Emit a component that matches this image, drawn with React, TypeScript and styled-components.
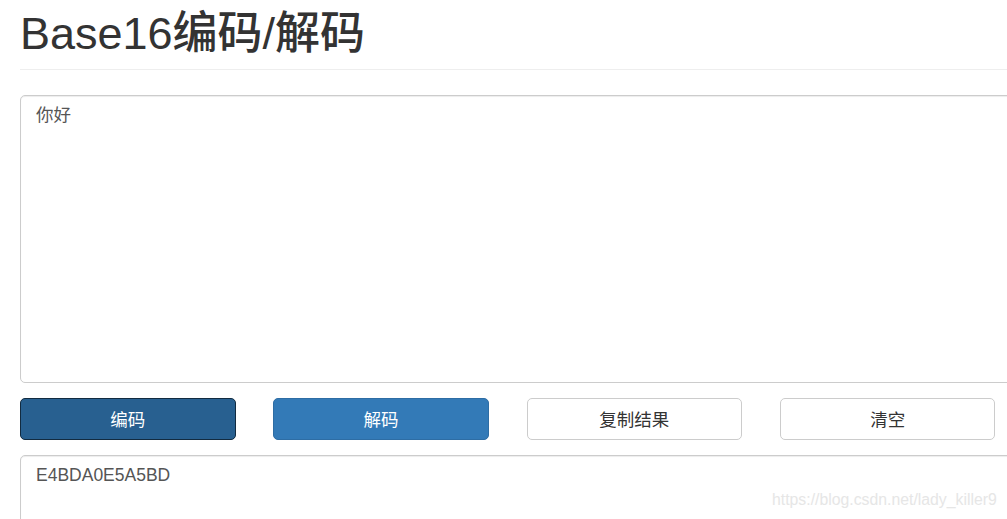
import React from "react";
import styled, { createGlobalStyle } from "styled-components";

const GlobalStyle = createGlobalStyle`
  html, body {
    margin: 0;
    padding: 0;
    background: #fff;
    overflow: hidden;
  }
  body {
    font-family: "Liberation Sans", Arial, "Noto Sans CJK SC", sans-serif;
    font-size: 17.5px;
    line-height: 1.42857;
    color: #333;
  }
  * { box-sizing: border-box; }
`;

const Page = styled.div`
  position: relative;
  width: 1007px;
  height: 519px;
  overflow: hidden;
`;

const Container = styled.div`
  width: 1100px;
  padding: 0 0 0 20px;
`;

const Header = styled.div`
  margin-top: 9px;
  padding-bottom: 10px;
  border-bottom: 1px solid #eee;
  margin-bottom: 25px;
`;

const Title = styled.h1`
  margin: 0;
  font-family: "Liberation Sans", Arial, "Noto Sans CJK SC", sans-serif;
  font-size: 45px;
  font-weight: 500;
  line-height: 1.1;
  color: #333;
`;

const TextBox = styled.div<{ $height: number }>`
  width: 1040px;
  height: ${(p) => p.$height}px;
  padding: 7.5px 15px;
  border: 1px solid #ccc;
  border-radius: 5px;
  box-shadow: inset 0 1px 1px rgba(0, 0, 0, 0.075);
  color: #555;
  font-size: 17.5px;
  line-height: 1.42857;
`;

const ButtonRow = styled.div`
  display: grid;
  grid-template-columns: repeat(4, 215.5px);
  column-gap: 37.8px;
  margin: 15px 0 15px;
`;

const Button = styled.button<{ $variant: "active" | "primary" | "default" }>`
  height: 42px;
  padding: 0 15px;
  font-family: "Liberation Sans", Arial, "Noto Sans CJK SC", sans-serif;
  font-size: 17.5px;
  border-radius: 5px;
  border: 1px solid
    ${(p) =>
      p.$variant === "active" ? "#122b40" : p.$variant === "primary" ? "#2e6da4" : "#ccc"};
  background: ${(p) =>
    p.$variant === "active" ? "#286090" : p.$variant === "primary" ? "#337ab7" : "#fff"};
  color: ${(p) => (p.$variant === "default" ? "#333" : "#fff")};
  cursor: pointer;
`;

const Watermark = styled.div`
  position: absolute;
  left: 772px;
  top: 489px;
  font-family: "Liberation Sans", Arial, sans-serif;
  font-size: 15.8px;
  line-height: 22px;
  color: #e6e6e6;
  white-space: nowrap;
`;

export default function App() {
  return (
    <>
      <GlobalStyle />
      <Page>
        <Container>
          <Header>
            <Title>Base16编码/解码</Title>
          </Header>
          <TextBox $height={288}>你好</TextBox>
          <ButtonRow>
            <Button $variant="active">编码</Button>
            <Button $variant="primary">解码</Button>
            <Button $variant="default">复制结果</Button>
            <Button $variant="default">清空</Button>
          </ButtonRow>
          <TextBox $height={120}>E4BDA0E5A5BD</TextBox>
        </Container>
        <Watermark>https://blog.csdn.net/lady_killer9</Watermark>
      </Page>
    </>
  );
}
